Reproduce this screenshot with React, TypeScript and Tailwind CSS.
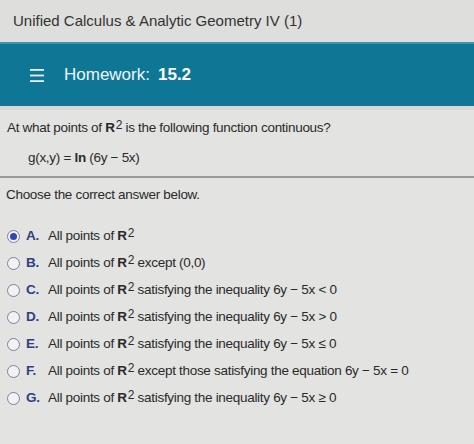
import React from 'react';

type Option = { key: string; text: React.ReactNode };

const R2 = () => (
  <span className="font-bold">
    R<sup className="text-[12px] font-normal relative -top-[3px] ml-[1px]">2</sup>
  </span>
);

const options: Option[] = [
  { key: 'A', text: <>All points of <R2 /></> },
  { key: 'B', text: <>All points of <R2 /> except (0,0)</> },
  { key: 'C', text: <>All points of <R2 /> satisfying the inequality 6y − 5x &lt; 0</> },
  { key: 'D', text: <>All points of <R2 /> satisfying the inequality 6y − 5x &gt; 0</> },
  { key: 'E', text: <>All points of <R2 /> satisfying the inequality 6y − 5x ≤ 0</> },
  { key: 'F', text: <>All points of <R2 /> except those satisfying the equation 6y − 5x = 0</> },
  { key: 'G', text: <>All points of <R2 /> satisfying the inequality 6y − 5x ≥ 0</> },
];

function Radio({ checked }: { checked?: boolean }) {
  return (
    <span className="w-[13px] h-[13px] rounded-full border-[1.5px] border-[#7a80a0] bg-[#f2f2f2] flex items-center justify-center shrink-0">
      {checked && <span className="w-[7px] h-[7px] rounded-full bg-[#2f47b8]" />}
    </span>
  );
}

export default function App() {
  return (
    <div
      className="w-[474px] h-[444px] overflow-hidden bg-[#e3e3e1] text-[#2a2a2a] text-[13.5px] tracking-[-0.3px]"
      style={{ fontFamily: '"Liberation Sans", Arial, sans-serif' }}
    >
      <div className="h-[42px] flex items-center pl-[13px] bg-[#dededc] text-[15px] tracking-normal text-[#333]">
        Unified Calculus &amp; Analytic Geometry IV (1)
      </div>

      <div className="h-[64px] bg-[#0f7696] border-t-2 border-[#3d94ad] flex items-center pl-[30px] text-white tracking-normal">
        <svg width="14" height="13" viewBox="0 0 14 13" className="mr-[20px]">
          <rect x="0" y="0" width="14" height="1.8" fill="#e8f2f6" />
          <rect x="0" y="5.6" width="14" height="1.8" fill="#e8f2f6" />
          <rect x="0" y="11.2" width="14" height="1.8" fill="#e8f2f6" />
        </svg>
        <span className="text-[17px] text-[#eef6f9]">Homework:</span>
        <span className="text-[17px] font-bold ml-[8px]">15.2</span>
      </div>

      <div className="h-[4px] bg-[#d8d8d6]" />

      <div className="pl-[7px] pt-[8px]">
        At what points of <R2 /> is the following function continuous?
      </div>
      <div className="pl-[28px] pt-[10px]">
        g(x,y) = <span className="font-bold">ln</span> (6y − 5x)
      </div>

      <div className="mt-[7px] h-[2px] bg-[#9a9a98]" />

      <div className="pl-[6px] pt-[7px]">Choose the correct answer below.</div>

      <div className="mt-[23px] flex flex-col gap-[10px]">
        {options.map((o, i) => (
          <div key={o.key} className="h-[17px] flex items-center pl-[7px]">
            <Radio checked={i === 0} />
            <span className="ml-[6px] w-[22px] font-bold text-[#2f3e85]">{o.key}.</span>
            <span>{o.text}</span>
          </div>
        ))}
      </div>
    </div>
  );
}
